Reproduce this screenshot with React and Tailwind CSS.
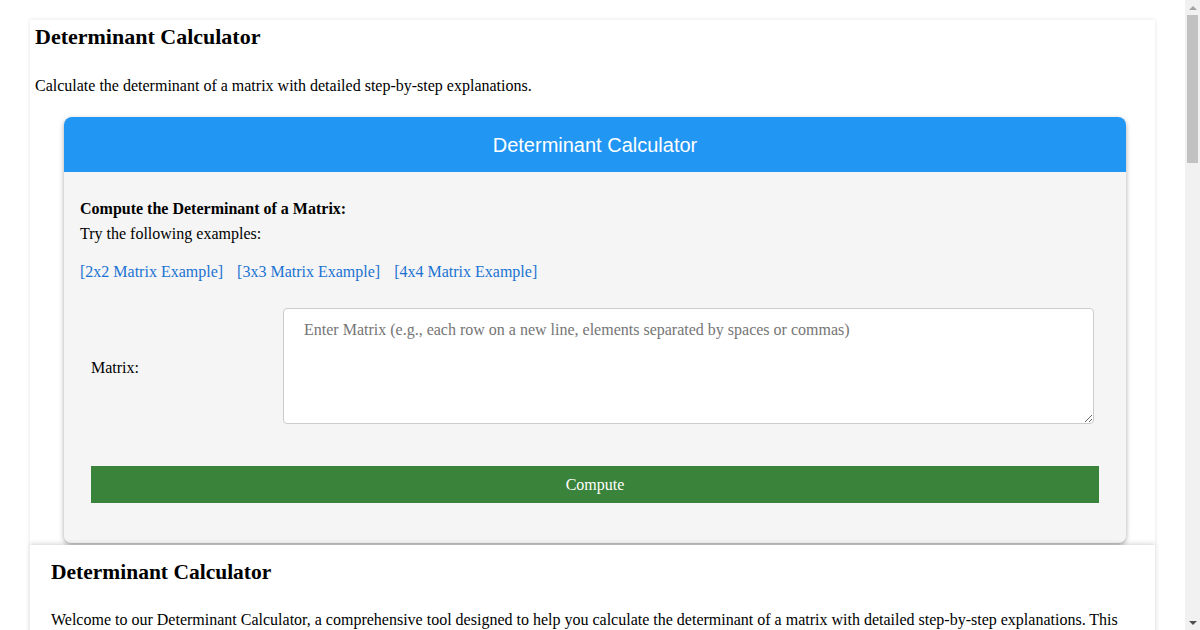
import React from 'react';

// Example matrices offered as quick links above the input
const EXAMPLES = ['[2x2 Matrix Example]', '[3x3 Matrix Example]', '[4x4 Matrix Example]'];

function Scrollbar() {
  return (
    <div className="w-[15px] h-[630px] shrink-0 bg-[#f1f1f1] flex flex-col items-center">
      <div className="h-[15px] flex items-center justify-center">
        <span className="block w-0 h-0 border-x-[4px] border-x-transparent border-b-[4px] border-b-[#a3a3a3]" />
      </div>
      <div className="w-[11px] h-[148px] bg-[#c1c1c1]" />
      <div className="flex-1" />
      <div className="h-[15px] flex items-center justify-center">
        <span className="block w-0 h-0 border-x-[4px] border-x-transparent border-t-[4px] border-t-[#505050]" />
      </div>
    </div>
  );
}

function CalculatorCard() {
  return (
    <div className="ml-[29px] mt-[22px] w-[1062px] rounded-lg shadow-[0_2px_5px_rgba(0,0,0,0.35)] overflow-hidden">
      {/* ── Header ── */}
      <div className="h-[55px] bg-[#2196f3] flex items-center justify-center text-white text-[20px] font-['Liberation_Sans',Arial,sans-serif]">
        Determinant Calculator
      </div>

      {/* ── Body ── */}
      <div className="bg-[#f5f5f5] px-4 pt-6 pb-10 text-[16px] leading-[25px]">
        <div className="font-bold">Compute the Determinant of a Matrix:</div>
        <div>Try the following examples:</div>
        <div className="mt-[13px] flex gap-[14px] text-[#1a73d2]">
          {EXAMPLES.map((label) => (
            <a key={label} href="#" className="hover:underline">
              {label}
            </a>
          ))}
        </div>

        <div className="mt-6 pl-[11px] pr-4 flex items-center">
          <label className="w-[192px] shrink-0 pt-[3px]">Matrix:</label>
          <textarea
            className="w-[811px] h-[116px] bg-white border border-[#cccccc] rounded px-5 py-[8px] text-[16px] leading-[25px] placeholder:text-[#757575] outline-none"
            placeholder="Enter Matrix (e.g., each row on a new line, elements separated by spaces or commas)"
          />
        </div>

        <div className="mt-[42px] px-[11px]">
          <button className="w-full h-[37px] bg-[#3a833a] text-white text-[16px]">Compute</button>
        </div>
      </div>
    </div>
  );
}

export default function App() {
  return (
    <div className="w-[1200px] h-[630px] overflow-hidden flex bg-white text-black font-['Liberation_Serif','Times_New_Roman',serif]">
      <main className="w-[1185px] h-[630px] overflow-hidden">
        <section className="mt-5 mx-[30px] bg-white shadow-[0_0_4px_rgba(0,0,0,0.12)] pt-[3px] pl-[5px] pb-[2px]">
          <h1 className="text-[22px] font-bold leading-[28px]">Determinant Calculator</h1>
          <p className="mt-[26px] text-[16px] leading-[18px]">
            Calculate the determinant of a matrix with detailed step-by-step explanations.
          </p>
          <CalculatorCard />
        </section>

        <section className="mx-[30px] bg-white shadow-[0_-1px_5px_rgba(0,0,0,0.18)] pt-[13px] px-[21px]">
          <h2 className="text-[21.5px] font-bold leading-[28px]">Determinant Calculator</h2>
          <p className="mt-[25px] text-[16px] leading-[18px]">
            Welcome to our Determinant Calculator, a comprehensive tool designed to help you calculate the
            determinant of a matrix with detailed step-by-step explanations. This calculator supports square
            matrices of any size and shows every cofactor expansion along the way.
          </p>
        </section>
      </main>
      <Scrollbar />
    </div>
  );
}
